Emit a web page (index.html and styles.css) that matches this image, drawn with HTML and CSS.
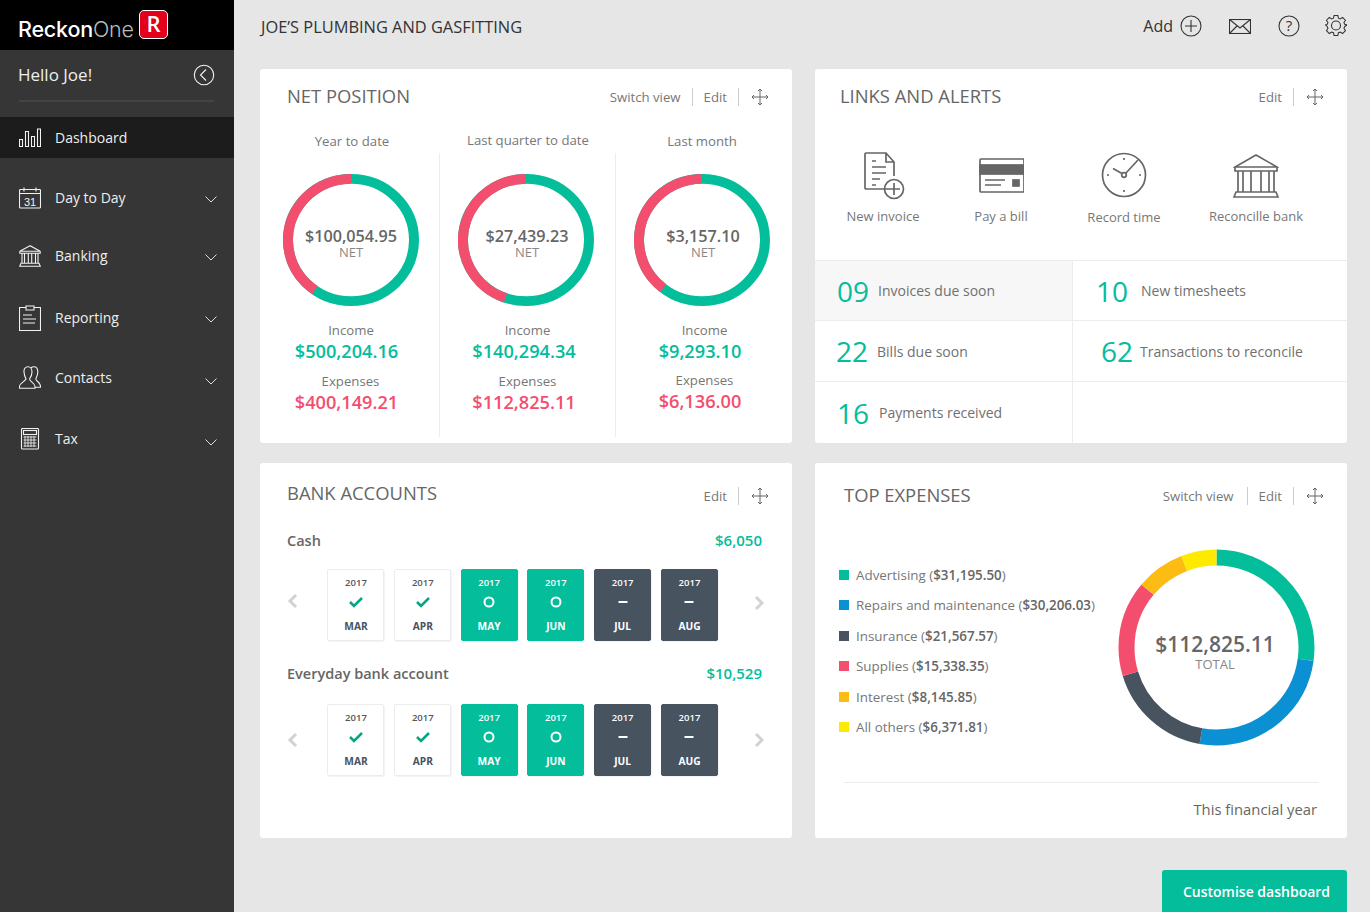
FILE: index.html
```html
<!DOCTYPE html>
<html lang="en">
<head>
<meta charset="utf-8">
<title>Reckon One Dashboard</title>
<link rel="stylesheet" href="styles.css">
</head>
<body>
<aside class="sidebar">
  <div class="logo"><span class="logo-a">Reckon</span><span class="logo-b">One</span><span class="logo-r">R</span></div>
  <div class="hello"><span>Hello Joe!</span>
    <svg width="22" height="22" viewBox="0 0 22 22" class="line-w"><circle cx="11" cy="11" r="9.7"/><path d="M13 5.5 7.5 11l5.5 5.5"/></svg>
  </div>
  <nav class="nav">
    <a class="nav-item active">
      <svg class="nav-ico line-w" width="22" height="19" viewBox="0 0 22 19"><path d="M.5 11.5h3v7h-3zM6.5 3.5h3v15h-3zM12.5 8.5h3v10h-3zM18.5 1h3v17.5h-3z"/></svg>
      <span>Dashboard</span></a>
    <a class="nav-item n-day">
      <svg class="nav-ico line-w" width="22" height="22" viewBox="0 0 22 22"><rect x=".5" y="2.5" width="21" height="18.5" rx="1"/><path d="M.5 6.5h21M5 .5v4M17 .5v4"/><text x="11" y="18.5" class="cal-num">31</text></svg>
      <span>Day to Day</span><svg class="chev" width="12" height="7" viewBox="0 0 12 7"><path d="M.5.5 6 6l5.500-5.500"/></svg></a>
    <a class="nav-item n-bank">
      <svg class="nav-ico line-w" width="22" height="22" viewBox="0 0 22 22"><path d="M11 .7.8 6.3h20.4zM.8 6.3v2h20.4v-2M3 8.3v10M5.5 8.3v10M9.3 8.3v10M12.7 8.3v10M16.5 8.3v10M19 8.3v10M2 18.3h18l1.3 3H.7z"/></svg>
      <span>Banking</span><svg class="chev" width="12" height="7" viewBox="0 0 12 7"><path d="M.5.5 6 6l5.500-5.500"/></svg></a>
    <a class="nav-item n-rep">
      <svg class="nav-ico line-w" width="22" height="27" viewBox="0 0 22 27"><path d="M7 3.500H.5v23h21v-23H15M7 2h8v4H7zM4 11h9M4 15h13M4 19h12"/></svg>
      <span>Reporting</span><svg class="chev" width="12" height="7" viewBox="0 0 12 7"><path d="M.5.5 6 6l5.500-5.500"/></svg></a>
    <a class="nav-item n-con">
      <svg class="nav-ico line-w" width="22" height="23" viewBox="0 0 22 23"><path d="M9 .7C6 .7 4.800 3 5 6c.2 3 1 5 2 7-1.500 3-6.500 4-6.500 7.500v1.800h15.500v-1.800C16 17 11 16 10.500 13c1.500-2 2.500-4 2.500-7 0-3-1.500-5.300-4-5.300zM12 1.700c1-.8 2-1 3-1 2.500 0 3.800 2.300 3.800 5.300 0 3-1 5-2 7 .5 2.500 4.700 3.500 4.700 7v1.300h-5"/></svg>
      <span>Contacts</span><svg class="chev chev-low" width="12" height="7" viewBox="0 0 12 7"><path d="M.5.5 6 6l5.500-5.500"/></svg></a>
    <a class="nav-item n-tax">
      <svg class="nav-ico line-w" width="22" height="22" viewBox="0 0 22 22"><rect x="2.500" y=".5" width="17" height="20.500" rx="1"/><rect x="4.500" y="2.500" width="13" height="4"/><path d="M4.500 9h13M4.500 12h13M4.500 15h13M4.500 18h13M6 8v11M9 8v11M12 8v11M15 8v11" class="thin"/></svg>
      <span>Tax</span><svg class="chev chev-low" width="12" height="7" viewBox="0 0 12 7"><path d="M.5.5 6 6l5.500-5.500"/></svg></a>
  </nav>
</aside>

<main class="main">
  <header class="topbar">
    <h1>JOE’S PLUMBING AND GASFITTING</h1>
    <div class="top-tools">
      <span class="add">Add</span>
      <svg width="22" height="22" viewBox="0 0 22 22" class="line-d add-ico"><circle cx="11" cy="11" r="10"/><path d="M11 5v12M5 11h12"/></svg>
      <svg width="22" height="15" viewBox="0 0 22 15" class="line-d mail-ico"><rect x=".5" y=".5" width="21" height="14"/><path d="M.5.5 11 9 21.500.5M.5 14.500 8 7M21.500 14.500 14 7"/></svg>
      <svg width="22" height="22" viewBox="0 0 22 22" class="line-d help-ico"><circle cx="11" cy="11" r="10"/><text x="11" y="16" class="help-q">?</text></svg>
      <svg width="22" height="22" viewBox="0 0 22 22" class="line-d gear-ico"><path d="M9 1h4l.6 2.800 1.900.8L18 3l3 3-1.600 2.500.8 1.900L23 11v0l-2.800 1.600-.8 1.900L21 17l-3 3-2.500-1.600-1.900.8L13 22H9l-.6-2.800-1.900-.8L4 20l-3-3 1.600-2.500-.8-1.900L0 11l1.800-.6.8-1.900L1 6l3-3 2.500 1.600 1.900-.8z" transform="translate(.5 -.5) scale(.95)"/><circle cx="11" cy="10.500" r="4.500"/></svg>
    </div>
  </header>

  <div class="grid">
    <section class="card">
      <div class="card-head">
        <h2>NET POSITION</h2>
        <div class="actions"><span>Switch view</span><i class="sep"></i><span>Edit</span><i class="sep"></i>
          <svg class="move" width="18" height="18" viewBox="0 0 18 18"><path d="M9 1v16M1 9h16M7 3l2-2 2 2M7 15l2 2 2-2M3 7 1 9l2 2M15 7l2 2-2 2"/></svg></div>
      </div>
      <div class="net-labels"><span>Year to date</span><span class="up1">Last quarter to date</span><span class="lbl3">Last month</span></div>
      <div class="net-cols">
        <div class="net-col">
          <div class="ring"><svg width="136" height="132" viewBox="0 0 136 136" preserveAspectRatio="none"><circle class="r-teal" cx="68" cy="68" r="63"/><circle class="r-red" cx="68" cy="68" r="63" pathLength="360" stroke-dasharray="145 360" transform="rotate(-145 68 68) rotate(-90 68 68)"/></svg>
            <div class="ring-text"><b>$100,054.95</b><span>NET</span></div></div>
          <div class="net-l">Income</div><div class="net-v teal s1">$500,204.16</div>
          <div class="net-l e1">Expenses</div><div class="net-v red s1">$400,149.21</div>
        </div>
        <div class="net-col">
          <div class="ring"><svg width="136" height="132" viewBox="0 0 136 136" preserveAspectRatio="none"><circle class="r-teal" cx="68" cy="68" r="63"/><circle class="r-red" cx="68" cy="68" r="63" pathLength="360" stroke-dasharray="161 360" transform="rotate(-161 68 68) rotate(-90 68 68)"/></svg>
            <div class="ring-text"><b>$27,439.23</b><span>NET</span></div></div>
          <div class="net-l">Income</div><div class="net-v teal s2">$140,294.34</div>
          <div class="net-l e2">Expenses</div><div class="net-v red s2">$112,825.11</div>
        </div>
        <div class="net-col">
          <div class="ring"><svg width="136" height="132" viewBox="0 0 136 136" preserveAspectRatio="none"><circle class="r-teal" cx="68" cy="68" r="63"/><circle class="r-red" cx="68" cy="68" r="63" pathLength="360" stroke-dasharray="142 360" transform="rotate(-142 68 68) rotate(-90 68 68)"/></svg>
            <div class="ring-text"><b>$3,157.10</b><span>NET</span></div></div>
          <div class="net-l s3">Income</div><div class="net-v teal s2">$9,293.10</div>
          <div class="net-l s3 e3">Expenses</div><div class="net-v red s2">$6,136.00</div>
        </div>
      </div>
    </section>

    <section class="card">
      <div class="card-head head-links">
        <h2>LINKS AND ALERTS</h2>
        <div class="actions"><span>Edit</span><i class="sep"></i>
          <svg class="move" width="18" height="18" viewBox="0 0 18 18"><path d="M9 1v16M1 9h16M7 3l2-2 2 2M7 15l2 2 2-2M3 7 1 9l2 2M15 7l2 2-2 2"/></svg></div>
      </div>
      <div class="quick">
        <div class="q-item">
          <svg width="46" height="48" viewBox="-3 0 46 48" class="q-ico"><path d="M25 37H3a1 1 0 0 1-1-1V2a1 1 0 0 1 1-1h20l8 9v14M23 1v9h8M9 9h4M9 15h14M9 21h14M9 27h8M9 33h4"/><circle cx="31" cy="37" r="9.500"/><path d="M31 31v12M25 37h12"/></svg>
          <span>New invoice</span></div>
        <div class="q-item">
          <svg width="46" height="48" viewBox="-1 0 46 48" class="q-ico"><rect x="1" y="7" width="44" height="33" rx="1"/><rect x="1" y="13" width="44" height="9" class="fill"/><path d="M6 28h20M6 33h16"/><rect x="34" y="28" width="6" height="6" class="fill"/></svg>
          <span>Pay a bill</span></div>
        <div class="q-item i-up">
          <svg width="46" height="48" viewBox="0 1 46 48" class="q-ico"><circle cx="23" cy="24" r="21.500"/><circle cx="23" cy="24" r="2.300"/><path d="M21 22.500l-9-5M25 22l12-13M23 7v2M23 39v2M6 24h2M38 24h2"/></svg>
          <span>Record time</span></div>
        <div class="q-item">
          <svg width="46" height="48" viewBox="0 0 46 48" class="q-ico"><path d="M23 3 2 15h42zM2 15v4h42v-4M5 19v21M10 19v21M18 19v21M28 19v21M36 19v21M41 19v21M3 40h40l2 5H1z"/></svg>
          <span>Reconcille bank</span></div>
      </div>
      <div class="alerts">
        <div class="alert hl"><b class="a1">09</b><span>Invoices due soon</span></div>
        <div class="alert bl"><b class="a2">10</b><span>New timesheets</span></div>
        <div class="alert bt r2"><b class="a3">22</b><span>Bills due soon</span></div>
        <div class="alert bt bl r2"><b class="a4">62</b><span>Transactions to reconcile</span></div>
        <div class="alert bt r3"><b class="a5">16</b><span>Payments received</span></div>
        <div class="alert bt bl r3"></div>
      </div>
    </section>

    <section class="card">
      <div class="card-head head-bank">
        <h2>BANK ACCOUNTS</h2>
        <div class="actions"><span>Edit</span><i class="sep"></i>
          <svg class="move" width="18" height="18" viewBox="0 0 18 18"><path d="M9 1v16M1 9h16M7 3l2-2 2 2M7 15l2 2 2-2M3 7 1 9l2 2M15 7l2 2-2 2"/></svg></div>
      </div>
      <div class="acct-row"><span>Cash</span><b>$6,050</b></div>
      <div class="tiles">
        <svg class="arrow a-up" width="12" height="16" viewBox="0 0 12 16"><path d="M10 2 4 8l6 6"/></svg>
        <div class="tile"><span>2017</span><svg width="16" height="14" viewBox="0 0 16 14"><path class="ok" d="M2 7l4 4 8-8"/></svg><em>MAR</em></div>
        <div class="tile"><span>2017</span><svg width="16" height="14" viewBox="0 0 16 14"><path class="ok" d="M2 7l4 4 8-8"/></svg><em>APR</em></div>
        <div class="tile green"><span>2017</span><svg width="16" height="14" viewBox="0 0 16 14"><circle class="open" cx="8" cy="7" r="4.500"/></svg><em>MAY</em></div>
        <div class="tile green"><span>2017</span><svg width="16" height="14" viewBox="0 0 16 14"><circle class="open" cx="8" cy="7" r="4.500"/></svg><em>JUN</em></div>
        <div class="tile slate"><span>2017</span><svg width="16" height="14" viewBox="0 0 16 14"><path class="open" d="M3.500 7h9"/></svg><em>JUL</em></div>
        <div class="tile slate"><span>2017</span><svg width="16" height="14" viewBox="0 0 16 14"><path class="open" d="M3.500 7h9"/></svg><em>AUG</em></div>
        <svg class="arrow arrow-r a-up-r" width="12" height="16" viewBox="0 0 12 16"><path d="M2 2l6 6-6 6"/></svg>
      </div>
      <div class="acct-row acct-2"><span>Everyday bank account</span><b>$10,529</b></div>
      <div class="tiles tiles-2">
        <svg class="arrow" width="12" height="16" viewBox="0 0 12 16"><path d="M10 2 4 8l6 6"/></svg>
        <div class="tile"><span>2017</span><svg width="16" height="14" viewBox="0 0 16 14"><path class="ok" d="M2 7l4 4 8-8"/></svg><em>MAR</em></div>
        <div class="tile"><span>2017</span><svg width="16" height="14" viewBox="0 0 16 14"><path class="ok" d="M2 7l4 4 8-8"/></svg><em>APR</em></div>
        <div class="tile green"><span>2017</span><svg width="16" height="14" viewBox="0 0 16 14"><circle class="open" cx="8" cy="7" r="4.500"/></svg><em>MAY</em></div>
        <div class="tile green"><span>2017</span><svg width="16" height="14" viewBox="0 0 16 14"><circle class="open" cx="8" cy="7" r="4.500"/></svg><em>JUN</em></div>
        <div class="tile slate"><span>2017</span><svg width="16" height="14" viewBox="0 0 16 14"><path class="open" d="M3.500 7h9"/></svg><em>JUL</em></div>
        <div class="tile slate"><span>2017</span><svg width="16" height="14" viewBox="0 0 16 14"><path class="open" d="M3.500 7h9"/></svg><em>AUG</em></div>
        <svg class="arrow arrow-r" width="12" height="16" viewBox="0 0 12 16"><path d="M2 2l6 6-6 6"/></svg>
      </div>
    </section>

    <section class="card">
      <div class="card-head head-top">
        <h2>TOP EXPENSES</h2>
        <div class="actions"><span class="switch-top">Switch view</span><i class="sep"></i><span>Edit</span><i class="sep"></i>
          <svg class="move" width="18" height="18" viewBox="0 0 18 18"><path d="M9 1v16M1 9h16M7 3l2-2 2 2M7 15l2 2 2-2M3 7 1 9l2 2M15 7l2 2-2 2"/></svg></div>
      </div>
      <div class="exp-body">
        <ul class="legend">
          <li><i class="c-teal"></i><span>Advertising (<b>$31,195.50</b>)</span></li>
          <li><i class="c-blue"></i><span>Repairs and maintenance (<b>$30,206.03</b>)</span></li>
          <li><i class="c-slate"></i><span>Insurance (<b>$21,567.57</b>)</span></li>
          <li><i class="c-red"></i><span>Supplies (<b>$15,338.35</b>)</span></li>
          <li><i class="c-orange"></i><span>Interest (<b>$8,145.85</b>)</span></li>
          <li><i class="c-yellow"></i><span>All others (<b>$6,371.81</b>)</span></li>
        </ul>
        <div class="donut">
          <svg width="197" height="197" viewBox="0 0 197 197">
            <g transform="rotate(-90 98.500 98.500)">
              <circle class="seg s-teal" cx="98.500" cy="98.500" r="90" pathLength="360" stroke-dasharray="98 360"/>
              <circle class="seg s-blue" cx="98.500" cy="98.500" r="90" pathLength="360" stroke-dasharray="92 360" stroke-dashoffset="-98"/>
              <circle class="seg s-slate" cx="98.500" cy="98.500" r="90" pathLength="360" stroke-dasharray="63 360" stroke-dashoffset="-190"/>
              <circle class="seg s-red" cx="98.500" cy="98.500" r="90" pathLength="360" stroke-dasharray="57 360" stroke-dashoffset="-253"/>
              <circle class="seg s-orange" cx="98.500" cy="98.500" r="90" pathLength="360" stroke-dasharray="29 360" stroke-dashoffset="-310"/>
              <circle class="seg s-yellow" cx="98.500" cy="98.500" r="90" pathLength="360" stroke-dasharray="21 360" stroke-dashoffset="-339"/>
            </g>
          </svg>
          <div class="donut-text"><b>$112,825.11</b><span>TOTAL</span></div>
        </div>
      </div>
      <div class="exp-foot">This financial year</div>
    </section>
  </div>
  <div class="btn-row"><button class="btn">Customise dashboard</button></div>
</main>
</body>
</html>
```
FILE: styles.css
```css
* { box-sizing: border-box; }
html, body { margin: 0; padding: 0; height: 912px; overflow: hidden; }
body { display: flex; background: #e6e6e6; font-family: "Open Sans", "Liberation Sans", sans-serif; color: #666; }
h1, h2, ul { margin: 0; padding: 0; }
svg { display: block; flex: none; }

.line-w, .line-w * { fill: none; stroke: #f2f2f2; stroke-width: 1.100; }
.line-w .thin { stroke-width: 1; opacity: .85; }
.line-w .cal-num { fill: #f2f2f2; stroke: none; font: 11px "Liberation Sans", sans-serif; text-anchor: middle; }
.line-d, .line-d * { fill: none; stroke: #333; stroke-width: 1.100; }
.line-d .help-q { fill: #333; stroke: none; font: 15px "Open Sans", sans-serif; text-anchor: middle; }

.sidebar { width: 234px; flex: none; height: 912px; background: #363636; color: #f0f0f0; }
.logo { height: 50px; background: #000; display: flex; align-items: flex-end; padding: 0 0 8px 18px; position: relative; font-family: Inter, "Open Sans", sans-serif; font-size: 21.500px; line-height: 26px; letter-spacing: -.2px; }
.logo-a { color: #fff; font-weight: 500; }
.logo-b { color: #bbb; font-weight: 300; }
.logo-r { position: absolute; left: 139px; top: 10px; width: 29px; height: 29px; background: #e2001a; border: 1px solid #fff; border-radius: 5px; color: #fff; font-family: "Open Sans", sans-serif; font-weight: 600; font-size: 22px; line-height: 25px; text-align: center; letter-spacing: 0; }
.hello { margin: 0 20px 0 19px; height: 52px; border-bottom: 2px solid #444; display: flex; align-items: center; justify-content: space-between; padding: 0 0 2px 0; font-size: 17px; color: #eee; }
.hello span { margin-left: -1px; }
.hello svg { margin: 2px -1px 0 0; }
.nav { display: flex; flex-direction: column; padding-top: 15px; }
.nav-item { display: flex; align-items: center; height: 41px; padding: 0 17px 0 19px; font-size: 14px; color: #eee; }
.nav-item > span { margin-left: 14px; flex: 1; }
.active { background: #1c1c1c; }
.n-day { margin-top: 19px; }
.n-bank { margin-top: 17px; }
.n-rep { margin-top: 21px; }
.n-con { margin-top: 19px; }
.n-tax { margin-top: 20px; }
.chev { fill: none; stroke: #ddd; stroke-width: 1; margin-top: 4px; }
.chev-low { margin-top: 8px; }

.main { flex: 1; padding: 0 23px 0 26px; min-width: 0; }
.topbar { height: 69px; display: flex; justify-content: space-between; padding: 15px 0 0 1px; }
.topbar h1 { font-size: 16.400px; font-weight: 400; line-height: 23px; color: #333; }
.top-tools { display: flex; align-items: flex-start; }
.add { font-size: 16px; line-height: 23px; color: #333; margin-right: 7px; font-weight: 500; }
.mail-ico { margin: 4px 0 0 27px; }
.help-ico { margin: 0 0 0 27px; }
.gear-ico { margin: 0 0 0 25px; }

.grid { display: grid; grid-template-columns: 532px 532px; grid-template-rows: 374px 375px; gap: 20px 23px; }
.card { background: #fff; border-radius: 3px; overflow: hidden; }
.card-head { height: 56px; display: flex; justify-content: space-between; align-items: center; padding: 0 23px 0 27px; }
.card-head h2 { font-size: 18.400px; font-weight: 400; color: #666; line-height: 24px; margin-top: -2px; }
.head-links { padding-left: 25px; }
.head-top { padding-left: 29px; padding-top: 9px; }
.head-bank { padding-top: 10px; }
.head-bank h2 { margin-top: -6px; }
.actions { display: flex; align-items: center; font-size: 13.200px; color: #777; }
.sep { width: 1px; height: 18px; background: #ccc; margin: 0 11px; }
.move { fill: none; stroke: #666; stroke-width: 1; margin-left: 1px; }
.switch-top { margin-right: 2px; }

.net-labels { display: grid; grid-template-columns: repeat(3, 176px); padding: 7px 0 0 4px; height: 28px; font-size: 13.200px; line-height: 18px; text-align: center; color: #777; }
.up1 { margin-top: -1px; }
.lbl3 { margin-left: -4px; }
.net-cols { display: grid; grid-template-columns: repeat(3, 176px); padding: 0 1px 0 3px; height: 284px; }
.net-col { border-left: 1px solid #ececec; text-align: center; padding-top: 21px; }
.net-col:first-child { border-left: 0; }
.ring { position: relative; width: 136px; height: 132px; margin: 0 auto 15px; }
.net-col + .net-col .ring { margin-left: 18px; }
.r-teal, .r-red { fill: none; stroke-width: 10; }
.r-teal { stroke: #04bd9b; }
.r-red { stroke: #f44e6f; }
.ring-text { position: absolute; inset: 0; display: flex; flex-direction: column; align-items: center; justify-content: center; padding-top: 7px; }
.net-col + .net-col .ring-text { padding-left: 2px; }
.ring-text b { font-size: 16.200px; line-height: 17px; font-weight: 600; color: #666; }
.ring-text span { font-size: 13px; line-height: 14px; color: #888; }
.net-l { font-size: 13.200px; line-height: 18px; color: #777; }
.net-v { font-size: 18.200px; line-height: 24px; font-weight: 600; margin-bottom: 10px; }
.teal { color: #04bd9b; }
.red { color: #f44e6f; }
.s1 { margin-left: -9px; }
.s2 { margin-left: -7px; }
.s3 { margin-left: 2px; }
.e1 { margin: -1px 0 0 -1px; }
.e2 { margin-top: -1px; }
.e3 { margin-top: -2px; }

.quick { display: grid; grid-template-columns: 136px 100px 146px 118px; height: 135px; padding-top: 27px; }
.q-item { display: flex; flex-direction: column; align-items: center; font-size: 13px; line-height: 18px; color: #777; }
.q-item svg { margin-bottom: 7px; }
.q-ico, .q-ico * { fill: none; stroke: #666; stroke-width: 1.700; }
.q-ico .fill { fill: #666; }
.i-up span { margin-top: 1px; }
.alerts { display: grid; grid-template-columns: 257px 275px; grid-template-rows: 59px 61px 62px; border-top: 1px solid #ececec; }
.alert { display: flex; align-items: center; font-size: 14px; color: #707070; padding-left: 22px; }
.alert b { font-size: 28px; font-weight: 400; color: #04bd9b; line-height: 32px; margin-right: 9px; }
.hl { background: #f7f7f7; }
.bl { border-left: 1px solid #ececec; padding-left: 23px; }
.bt { border-top: 1px solid #ececec; }
.a2 { margin-right: 13px !important; }
.a3 { margin-left: -1px; }
.a4 { margin: 0 7px 0 5px !important; }
.a5 { margin-right: 10px !important; }

.acct-row { display: flex; justify-content: space-between; align-items: center; height: 20px; padding: 0 30px 0 27px; margin-top: 11px; font-size: 14.500px; color: #666; font-weight: 600; }
.acct-row span { font-weight: 600; }
.acct-row b { color: #04bd9b; font-weight: 600; font-size: 15px; }
.acct-2 { margin-top: 22px; }
.tiles { display: flex; align-items: center; gap: 9.800px; padding-left: 26px; margin-top: 19px; height: 72px; }
.tiles-2 { margin-top: 21px; }
.arrow { fill: none; stroke: #d2d2d2; stroke-width: 3; margin-right: 19.200px; }
.arrow-r { margin: 0 0 0 26px; }
.a-up { margin-bottom: 8px; }
.a-up-r { margin-bottom: 4px; }
.tile { width: 57px; height: 72px; border: 1px solid #ececec; border-radius: 2px; display: flex; flex-direction: column; align-items: center; padding: 7px 0 0 1px; font-size: 9.500px; line-height: 12px; font-weight: 600; color: #555; box-shadow: 1px 1px 1px rgba(0,0,0,.05); }
.tile svg { margin: 6px 0 11px; }
.tile em { font-style: normal; font-weight: 700; font-size: 10.200px; color: #47535f; }
.ok { fill: none; stroke: #04a582; stroke-width: 2.500; }
.open { fill: none; stroke: #fff; stroke-width: 2; }
.green, .slate { padding-left: 0; }
.green { background: #04bd9b; border-color: #04bd9b; color: #fff; }
.slate { background: #47535f; border-color: #47535f; color: #fff; }
.green em, .slate em { color: #fff; }

.exp-body { display: flex; height: 263px; padding-right: 32px; }
.legend { list-style: none; flex: 1; padding: 46px 0 0 24px; font-size: 13.400px; color: #777; }
.legend li { display: flex; align-items: center; height: 20px; margin-bottom: 10.400px; white-space: nowrap; }
.legend b { font-weight: 600; color: #666; }
.legend i { width: 10px; height: 10px; margin-right: 7px; }
.c-teal { background: #04bd9b; }
.c-blue { background: #0b90d4; }
.c-slate { background: #47535f; }
.c-red { background: #f44e6f; }
.c-orange { background: #fdbc13; }
.c-yellow { background: #fdea00; }
.donut { position: relative; width: 197px; height: 197px; margin-top: 30px; }
.seg { fill: none; stroke-width: 16; }
.s-teal { stroke: #04bd9b; }
.s-blue { stroke: #0b90d4; }
.s-slate { stroke: #47535f; }
.s-red { stroke: #f44e6f; }
.s-orange { stroke: #fdbc13; }
.s-yellow { stroke: #fdea00; }
.donut-text { position: absolute; inset: 0; display: flex; flex-direction: column; align-items: center; justify-content: center; padding: 7px 3px 0 0; }
.donut-text b { font-size: 21px; font-weight: 600; line-height: 26px; color: #666; }
.donut-text span { font-size: 13px; line-height: 14px; color: #888; }
.exp-foot { margin: 0 28px 0 29px; border-top: 1px solid #ececec; text-align: right; font-size: 14.800px; line-height: 20px; padding: 16px 2px 0 0; color: #666; }

.btn-row { display: flex; justify-content: flex-end; margin-top: 32px; }
.btn { width: 185px; height: 42px; background: #04bd9b; color: #fff; border: 0; border-radius: 3px 3px 0 0; font: 600 14px "Open Sans", sans-serif; padding: 0 0 0 4px; }
```
